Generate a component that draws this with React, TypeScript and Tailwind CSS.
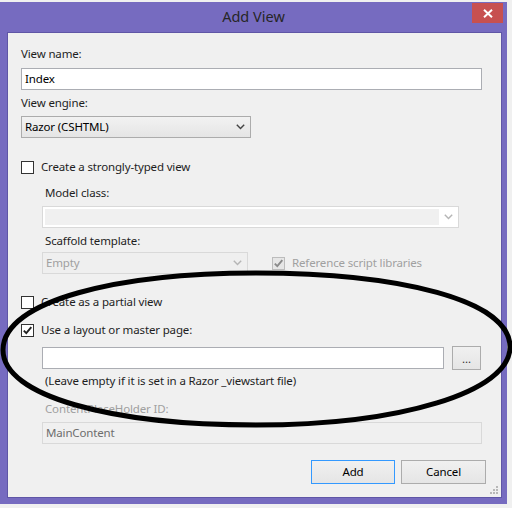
import React from 'react';

function Chevron({ color = '#444' }: { color?: string }) {
  return (
    <svg width="9" height="6" viewBox="0 0 9 6">
      <path d="M0.8 0.8 L4.5 4.6 L8.2 0.8" fill="none" stroke={color} strokeWidth="1.4" />
    </svg>
  );
}

function CheckBox({ checked = false, disabled = false }: { checked?: boolean; disabled?: boolean }) {
  return (
    <div
      className={
        disabled
          ? 'w-[13px] h-[13px] border border-[#bcbcbc] bg-[#e6e6e6] flex items-center justify-center shrink-0'
          : 'w-[13px] h-[13px] border border-[#333333] bg-white flex items-center justify-center shrink-0'
      }
    >
      {checked && (
        <svg width="11" height="11" viewBox="0 0 11 11">
          <path
            d="M1.8 5.6 L4.3 8.2 L9.3 2.2"
            fill="none"
            stroke={disabled ? '#8a8a8a' : '#222'}
            strokeWidth="1.9"
          />
        </svg>
      )}
    </div>
  );
}

function Label({ children, indent = false, muted = false }: { children: React.ReactNode; indent?: boolean; muted?: boolean }) {
  return (
    <div
      className={
        (indent ? 'ml-[24px] ' : '') +
        (muted ? 'text-[#a0a0a0] ' : 'text-[#1e1e1e] ') +
        'h-[16px] leading-[16px] whitespace-nowrap'
      }
    >
      {children}
    </div>
  );
}

function CheckRow({ label, checked = false, disabled = false }: { label: string; checked?: boolean; disabled?: boolean }) {
  return (
    <div className="flex items-center gap-[7px] h-[16px]">
      <CheckBox checked={checked} disabled={disabled} />
      <span className={disabled ? 'text-[#a0a0a0] leading-[16px] whitespace-nowrap' : 'text-[#1e1e1e] leading-[16px] whitespace-nowrap'}>
        {label}
      </span>
    </div>
  );
}

export default function App() {
  return (
    <div className="relative w-[512px] h-[508px] overflow-hidden bg-[#f0f0f0] pt-[2px] font-['Noto_Sans',sans-serif] text-[11.5px] tracking-[-0.15px]">
      {/* window frame */}
      <div className="w-[507px] h-[502px] bg-[#766bc0] flex flex-col">
        {/* title bar */}
        <div className="relative h-[30px] flex items-center justify-center">
          <span className="text-[14.5px] tracking-normal text-[#262626] leading-none -mt-[1px]">Add View</span>
          <div className="absolute top-[1px] right-[4px] w-[31px] h-[20px] bg-[#c75050] flex items-center justify-center">
            <svg width="10" height="9" viewBox="0 0 10 9">
              <path d="M1 0.8 L9 8.2 M9 0.8 L1 8.2" stroke="#fff" strokeWidth="2" />
            </svg>
          </div>
        </div>

        {/* client area */}
        <div className="relative ml-[7px] w-[495px] h-[466px] bg-[#f0f0f0] border border-[#5f56a6] pl-[13px] pr-[19px] pt-[13px] flex flex-col">
          <Label>View name:</Label>
          <div className="mt-[6px] h-[22px] border border-[#abadb3] bg-white flex items-center px-[3px] text-black">
            Index
          </div>

          <div className="mt-[5px]">
            <Label>View engine:</Label>
          </div>
          <div className="mt-[5px] w-[230px] h-[22px] border border-[#acacac] bg-gradient-to-b from-[#f2f2f2] to-[#e5e5e5] flex items-center justify-between pl-[3px] pr-[5px] text-black">
            <span>Razor (CSHTML)</span>
            <Chevron />
          </div>

          <div className="mt-[21px]">
            <CheckRow label="Create a strongly-typed view" />
          </div>

          <div className="mt-[10px]">
            <Label indent>Model class:</Label>
          </div>
          <div className="mt-[5px] ml-[21px] w-[417px] h-[22px] border border-[#d9d9d9] bg-white flex p-[2px] pr-0">
            <div className="flex-1 bg-[#f0f0f0]" />
            <div className="w-[19px] flex items-center justify-center">
              <Chevron color="#b5b5b5" />
            </div>
          </div>

          <div className="mt-[5px]">
            <Label indent>Scaffold template:</Label>
          </div>
          <div className="mt-[3px] ml-[21px] flex items-center h-[22px]">
            <div className="w-[206px] h-[22px] border border-[#d9d9d9] bg-[#efefef] flex items-center justify-between pl-[3px] pr-[5px] text-[#a0a0a0]">
              <span>Empty</span>
              <Chevron color="#b5b5b5" />
            </div>
            <div className="ml-[24px]">
              <CheckRow label="Reference script libraries" checked disabled />
            </div>
          </div>

          <div className="mt-[20px]">
            <CheckRow label="Create as a partial view" />
          </div>
          <div className="mt-[12px]">
            <CheckRow label="Use a layout or master page:" checked />
          </div>

          <div className="mt-[8px] ml-[21px] flex items-center h-[24px] gap-[8px]">
            <div className="w-[402px] h-[22px] border border-[#abadb3] bg-white" />
            <div className="w-[29px] h-[24px] border border-[#acacac] bg-gradient-to-b from-[#f0f0f0] to-[#e5e5e5] flex items-center justify-center text-[#333] leading-none pt-[2px]">
              ...
            </div>
          </div>

          <div className="mt-[3px]">
            <Label indent>(Leave empty if it is set in a Razor _viewstart file)</Label>
          </div>

          <div className="mt-[12px]">
            <Label indent muted>ContentPlaceHolder ID:</Label>
          </div>
          <div className="mt-[5px] ml-[21px] w-[440px] h-[22px] border border-[#d9d9d9] bg-[#f0f0f0] flex items-center px-[3px] text-[#6d6d6d]">
            MainContent
          </div>

          <div className="mt-[16px] -mr-[4px] flex justify-end gap-[6px]">
            <div className="w-[84px] h-[24px] border border-[#3399ff] bg-gradient-to-b from-[#f0f0f0] to-[#e5e5e5] flex items-center justify-center text-black">
              Add
            </div>
            <div className="w-[85px] h-[24px] border border-[#acacac] bg-gradient-to-b from-[#f0f0f0] to-[#e5e5e5] flex items-center justify-center text-black">
              Cancel
            </div>
          </div>

          {/* size grip */}
          <svg className="absolute right-[2px] bottom-[2px]" width="10" height="10" viewBox="0 0 10 10">
            <rect x="7" y="1" width="2" height="2" fill="#b8b8b8" />
            <rect x="4" y="4" width="2" height="2" fill="#b8b8b8" />
            <rect x="7" y="4" width="2" height="2" fill="#b8b8b8" />
            <rect x="1" y="7" width="2" height="2" fill="#b8b8b8" />
            <rect x="4" y="7" width="2" height="2" fill="#b8b8b8" />
            <rect x="7" y="7" width="2" height="2" fill="#b8b8b8" />
          </svg>
        </div>
      </div>

      {/* hand-drawn annotation ellipse over the dialog */}
      <svg className="absolute left-0 top-0 pointer-events-none" width="512" height="508" viewBox="0 0 512 508">
        <path
          d="M3 350 C3 300 120 273 256 273 C400 273 510 300 510 347 C510 392 400 425 256 425 C110 425 3 396 3 350 Z"
          fill="none"
          stroke="#000"
          strokeWidth="5"
        />
      </svg>
    </div>
  );
}
